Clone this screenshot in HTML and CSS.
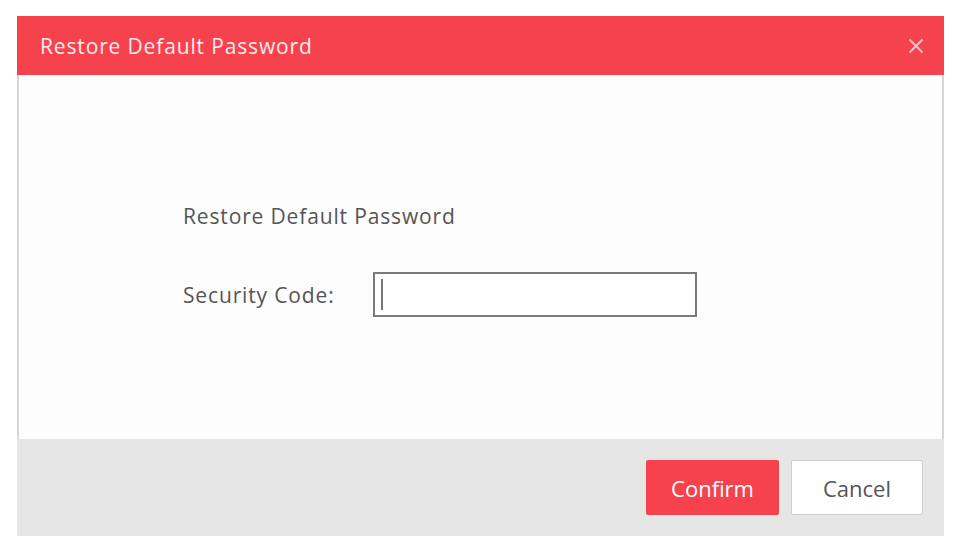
FILE: index.html
```html
<!DOCTYPE html>
<html>
<head>
<meta charset="utf-8">
<link rel="stylesheet" href="styles.css">
</head>
<body>
<div class="dialog">
  <div class="header">
    <span class="title">Restore Default Password</span>
    <svg class="close" width="16" height="16" viewBox="0 0 16 16"><path d="M1.5 1.5L14.5 14.5M14.5 1.5L1.5 14.5" stroke="#ecc3c6" stroke-width="2" fill="none"/></svg>
  </div>
  <div class="body">
    <div class="content">
      <div class="heading">Restore Default Password</div>
      <div class="row">
        <span class="label">Security Code:</span>
        <div class="input"><span class="caret"></span></div>
      </div>
    </div>
  </div>
  <div class="footer">
    <button class="btn primary">Confirm</button>
    <button class="btn secondary">Cancel</button>
  </div>
</div>
</body>
</html>
```
FILE: styles.css
```css
html, body {
  margin: 0;
  padding: 0;
  background: #ffffff;
}
body {
  padding: 16px 12px 0 17px;
  font-family: "Open Sans", "Noto Sans", sans-serif;
}
.dialog {
  width: 927px;
  height: 520px;
  display: flex;
  flex-direction: column;
}
.header {
  height: 59px;
  background: #f6424d;
  display: flex;
  align-items: center;
  justify-content: space-between;
  padding: 0 20px 0 23px;
  flex: none;
}
.title {
  color: #fdeaec;
  font-size: 21px;
  letter-spacing: 0.85px;
}
.close {
  display: block;
}
.body {
  flex: 1;
  background: #fdfdfd;
  border-left: 2px solid #d6d6d6;
  border-right: 2px solid #d6d6d6;
}
.content {
  padding: 126px 0 0 164px;
  color: #555;
  font-size: 21px;
  letter-spacing: 0.85px;
}
.heading {
  line-height: 30px;
}
.row {
  display: flex;
  align-items: center;
  margin-top: 41px;
}
.label {
  width: 190px;
}
.input {
  box-sizing: border-box;
  width: 324px;
  height: 45px;
  border: 2px solid #7a7a7a;
  background: #fff;
  display: flex;
  align-items: center;
  padding-left: 6px;
}
.caret {
  width: 2px;
  height: 31px;
  background: #777;
}
.footer {
  height: 97px;
  flex: none;
  background: #e6e6e6;
  display: flex;
  align-items: center;
  justify-content: flex-end;
  gap: 12px;
  padding-right: 21px;
}
.btn {
  height: 55px;
  font-family: "Open Sans", "Noto Sans", sans-serif;
  font-size: 22px;
  border-radius: 2px;
  cursor: pointer;
}
.primary {
  width: 133px;
  background: #f6424d;
  color: #fff;
  border: none;
}
.secondary {
  width: 132px;
  background: #fff;
  color: #555;
  border: 1px solid #cfcfcf;
}
```
